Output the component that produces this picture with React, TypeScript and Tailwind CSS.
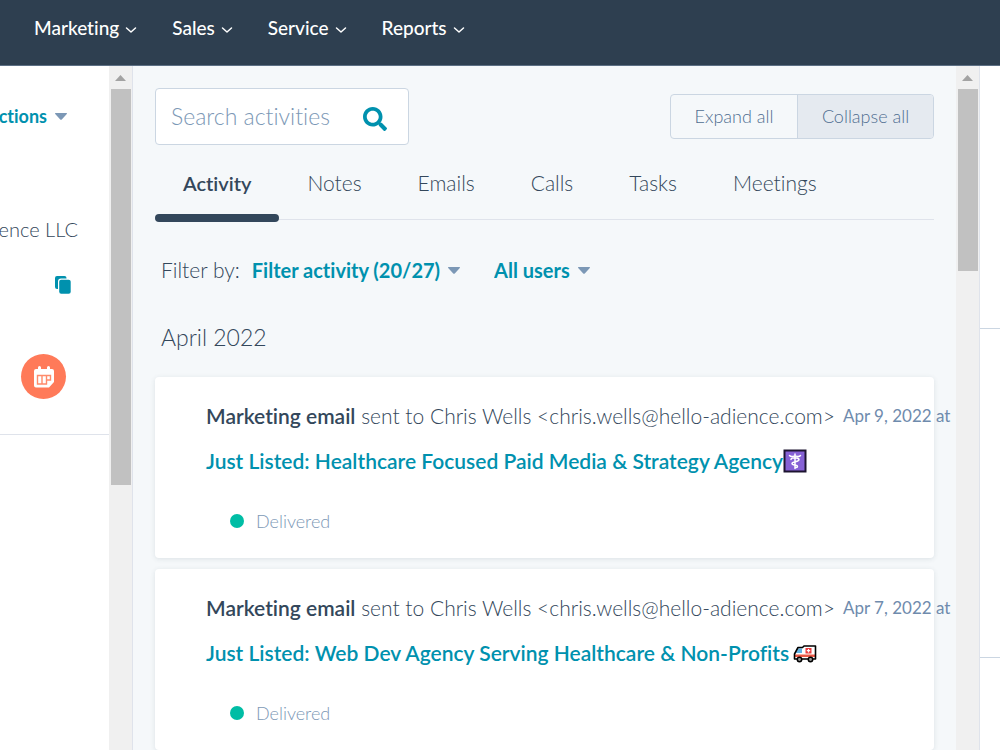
import { FaSearch } from 'react-icons/fa';

const navItems = ['Marketing', 'Sales', 'Service', 'Reports'];

const tabs = ['Activity', 'Notes', 'Emails', 'Calls', 'Tasks', 'Meetings'];

const activities = [
    {
        recipient: 'Chris Wells <chris.wells@hello-adience.com>',
        date: 'Apr 9, 2022 at',
        subject: 'Just Listed: Healthcare Focused Paid Media & Strategy Agency',
        icon: 'medical',
        status: 'Delivered',
    },
    {
        recipient: 'Chris Wells <chris.wells@hello-adience.com>',
        date: 'Apr 7, 2022 at',
        subject: 'Just Listed: Web Dev Agency Serving Healthcare & Non-Profits',
        icon: 'ambulance',
        status: 'Delivered',
    },
];

function Chevron() {
    return (
        <svg className="w-3 h-2 mt-1" viewBox="0 0 12 8" fill="none" stroke="currentColor" strokeWidth={1.5} strokeLinecap="round" strokeLinejoin="round">
            <path d="M1.500 2L6 6l4.500-4" />
        </svg>
    );
}

function Caret() {
    return (
        <svg className="w-3 h-[7px] shrink-0 text-[#7c98b6]" viewBox="0 0 12 7" fill="currentColor">
            <path d="M.6 0h10.800c.6 0 .8.6.4 1L7 6.300a1.400 1.400 0 0 1-2 0L.2 1C-.2.600 0 0 .6 0z" />
        </svg>
    );
}

function CopyIcon() {
    return (
        <svg className="w-4 h-[18px]" viewBox="0 0 16 18" fill="#0091ae">
            <path d="M2 0h7.500a2 2 0 0 1 2 2v.5H6a3 3 0 0 0-3 3V13H2a2 2 0 0 1-2-2V2a2 2 0 0 1 2-2z" />
            <rect x="4.200" y="3.700" width="11.500" height="14" rx="2" />
        </svg>
    );
}

function CalendarIcon() {
    return (
        <svg className="w-5 h-[22px]" viewBox="0 0 20 22" fill="none">
            <path d="M2 3h2V1.500a1.500 1.500 0 0 1 3 0V3h6V1.500a1.500 1.500 0 0 1 3 0V3h2a2 2 0 0 1 2 2v11l-5 5.500H2a2 2 0 0 1-2-2V5a2 2 0 0 1 2-2z" fill="#fff" />
            <path d="M3.500 9.500h13v4.500h-4v4h-9zM8 9.500V18M12.500 9.500V14" stroke="#ff8b6b" strokeWidth={1.400} />
        </svg>
    );
}

function MedicalIcon() {
    return (
        <svg className="w-6 h-6" viewBox="0 0 24 24" fill="none">
            <rect x="1.500" y="1.500" width="21" height="21" fill="#8661d5" stroke="#1d1430" strokeWidth={2} />
            <path d="M12 5v14.500M6.500 6.500c1.500 1.800 3.500 1 5.500.3 2 .7 4 1.500 5.500-.3M8 10.500c0-2.500 8-2 8 .3s-7 1.500-7 3.700 5.500 1 5.500 2.800-2.500 1.200-2.500 1.200" stroke="#fff" strokeWidth={1.500} strokeLinecap="round" />
        </svg>
    );
}

function AmbulanceIcon() {
    return (
        <svg className="w-6 h-6 ml-1" viewBox="0 0 24 24" fill="none">
            <path d="M1.500 18v-5L5 6.500h17.500V18z" fill="#fff" />
            <path d="M2.800 12L5.500 7.500H9V12z" fill="#61b2e4" />
            <path d="M1.500 13.500h21V16h-21z" fill="#ea5a47" />
            <path d="M12.500 7h6v5.500h-6z" fill="#ea3a3d" />
            <path d="M15.500 8v3.500M13.800 9.700h3.400" stroke="#fff" strokeWidth={1.200} />
            <path d="M1.500 18v-5L5 6.500h4.500L11 5h11.500v13z" stroke="#000" strokeWidth={1.600} strokeLinejoin="round" />
            <circle cx="6.500" cy="18.500" r="2.200" fill="#9b9b9a" stroke="#000" strokeWidth={1.500} />
            <circle cx="17.500" cy="18.500" r="2.200" fill="#9b9b9a" stroke="#000" strokeWidth={1.500} />
        </svg>
    );
}

function Scrollbar({ thumb }: { thumb: string }) {
    return (
        <div className="w-6 shrink-0 bg-[#f0f0f0] border-r border-[#dfe3eb] flex flex-col items-center">
            <div className="h-[23px] flex items-center">
                <svg className="w-[11px] h-[6px]" viewBox="0 0 11 6" fill="#a3a3a3">
                    <path d="M5.500 0L11 6H0z" />
                </svg>
            </div>
            <div className={`w-5 bg-[#c1c1c1] ${thumb}`}></div>
        </div>
    );
}

export default function App() {
    return (
        <div className="h-screen flex flex-col overflow-hidden bg-white text-[#33475b] font-light font-['Lato',sans-serif] [font-variant-ligatures:none]">
            <header className="h-[66px] shrink-0 bg-[#2e3f50] border-b border-[#5c6f84]">
                <nav className="h-14 pl-[34px] flex items-center gap-[35px] text-[19px] font-medium text-white">
                    {navItems.map((item) => (
                        <button key={item} className="flex items-center gap-1.5">
                            {item}
                            <Chevron />
                        </button>
                    ))}
                </nav>
            </header>

            <div className="flex-1 min-h-0 flex">
                {/* Contact sidebar */}
                <aside className="w-[109px] shrink-0 overflow-hidden">
                    <div className="h-[369px] border-b border-[#dfe3eb] flex flex-col items-end whitespace-nowrap">
                        <button className="mt-9 mr-[42px] h-7 flex items-center gap-2 text-lg font-bold text-[#0091ae]">
                            ctions
                            <Caret />
                        </button>
                        <p className="mt-[85px] mr-[31px] text-xl leading-7">ence LLC</p>
                        <button aria-label="Copy" className="mt-[33px] mr-[38px]">
                            <CopyIcon />
                        </button>
                        <button aria-label="Meet" className="mt-[60px] mr-[43px] w-[45px] h-[45px] rounded-full bg-[#ff7a59] flex items-center justify-center">
                            <CalendarIcon />
                        </button>
                    </div>
                </aside>
                <Scrollbar thumb="h-[396px]" />

                {/* Timeline */}
                <main className="flex-1 min-w-0 overflow-hidden bg-[#f5f8fa] px-[22px] pt-[22px]">
                    <div className="flex items-center justify-between">
                        <label className="w-[254px] h-[57px] px-[15px] flex items-center bg-white border border-[#cbd6e2] rounded-[4px]">
                            <input
                                type="text"
                                aria-label="Search activities"
                                placeholder="Search activities"
                                className="flex-1 min-w-0 text-[23px] outline-none placeholder:text-[#7c98b6]"
                            />
                            <FaSearch className="w-6 h-6 mr-1.5 mt-1 text-[#0091ae]" />
                        </label>
                        <div className="flex h-[45px] text-lg text-[#506e91] border border-[#cbd6e2] rounded-[4px] overflow-hidden">
                            <button className="w-[126px] pb-0.5">Expand all</button>
                            <button className="w-[136px] pb-0.5 bg-[#e5eaf0] border-l border-[#cbd6e2]">Collapse all</button>
                        </div>
                    </div>

                    <div role="tablist" className="mt-3 h-[63px] flex border-b border-[#dfe3eb] text-[21px] leading-7">
                        {tabs.map((tab, idx) => (
                            <button
                                key={tab}
                                role="tab"
                                aria-selected={idx === 0}
                                className={`relative h-[52px] px-7 flex items-center ${idx === 0 ? 'text-xl font-semibold' : ''}`}
                            >
                                {tab}
                                {idx === 0 && <span className="absolute left-0 right-0 top-[57px] h-2 rounded-full bg-[#33475b]"></span>}
                            </button>
                        ))}
                    </div>

                    <div className="mt-9 pl-1.5 flex items-center text-[21px] leading-7">
                        <span>Filter by:</span>
                        <button className="ml-3 flex items-center gap-2 text-xl font-bold text-[#0091ae]">
                            Filter activity (20/27)
                            <Caret />
                        </button>
                        <label className="ml-[34px] flex items-center gap-2 text-xl">
                            <select aria-label="Users" className="appearance-none field-sizing-content font-bold text-[#0091ae]">
                                <option>All users</option>
                            </select>
                            <Caret />
                        </label>
                    </div>

                    <h2 className="mt-[37px] pl-1.5 text-[23px] leading-8">April 2022</h2>

                    <div className="mt-6 flex flex-col gap-[11px]">
                        {activities.map((activity) => (
                            <article key={activity.date} className="h-[181px] pl-[51px] pt-[25px] bg-white rounded-[4px] shadow-[0_1px_5px_rgba(45,62,80,0.12)] whitespace-nowrap">
                                <div className="flex items-center text-[21px] leading-7">
                                    <p>
                                        <strong className="font-semibold">Marketing email</strong> sent to {activity.recipient}
                                    </p>
                                    <time className="ml-2 text-[17px] font-normal text-[#6f8bad]">{activity.date}</time>
                                </div>
                                <div className="mt-[17px] flex items-center text-[21px] leading-7">
                                    <a href="#" className="font-semibold text-[#0091ae]">{activity.subject}</a>
                                    {activity.icon === 'medical' ? <MedicalIcon /> : <AmbulanceIcon />}
                                </div>
                                <div className="mt-8 pl-6 flex items-center gap-3 text-lg leading-7 text-[#7c98b6]">
                                    <span className="w-3.5 h-3.5 rounded-full bg-[#00bda5]"></span>
                                    {activity.status}
                                </div>
                            </article>
                        ))}
                    </div>
                </main>
                <Scrollbar thumb="h-[182px]" />

                {/* Right panel edge */}
                <aside className="w-5 shrink-0">
                    <div className="h-[263px] border-b border-[#cbd6e2]"></div>
                    <div className="h-[329px] border-b border-[#cbd6e2]"></div>
                </aside>
            </div>
        </div>
    );
}
